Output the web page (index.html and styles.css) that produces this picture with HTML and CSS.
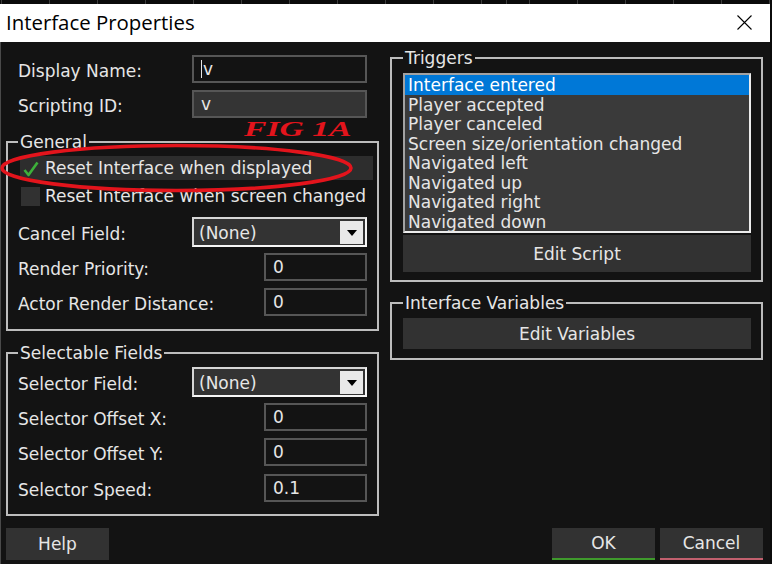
FILE: index.html
```html
<!DOCTYPE html>
<html>
<head>
  <title>Interface Properties</title>
  <meta charset="UTF-8">
  <link rel="stylesheet" href="styles.css">
</head>
<body>
  <div class="top-strip"></div>
  <div class="window">
    <div class="titlebar">
      <span class="title">Interface Properties</span>
      <svg class="close" width="15" height="15" viewBox="0 0 15 15">
        <path d="M0.5 0.5 L14.5 14.5 M14.5 0.5 L0.5 14.5" stroke="#000" stroke-width="1.1" fill="none"/>
      </svg>
    </div>

    <div class="dialog">
      <div class="columns">
        <div class="col-left">
          <div class="top-fields">
            <div class="row">
              <label>Display Name:</label>
              <div class="field field-wide"><span class="caret"></span>v</div>
            </div>
            <div class="row row-gap">
              <label>Scripting ID:</label>
              <div class="field field-wide field-readonly">v</div>
            </div>
          </div>

          <fieldset class="group group-general">
            <legend>General</legend>
            <div class="check-row check-row-active">
              <svg class="check" width="16" height="16" viewBox="0 0 16 16">
                <path d="M1.5 9 L5.5 14 L14.5 1.5" stroke="#3db03a" stroke-width="2.6" fill="none" stroke-linejoin="round"/>
              </svg>
              <span>Reset Interface when displayed</span>
            </div>
            <div class="check-row check-row-plain">
              <span class="box"></span>
              <span>Reset Interface when screen changed</span>
            </div>
            <div class="row row-select">
              <label>Cancel Field:</label>
              <div class="select"><span class="select-text">(None)</span><span class="arrow"></span></div>
            </div>
            <div class="row mt6">
              <label>Render Priority:</label>
              <div class="field field-short">0</div>
            </div>
            <div class="row mt7">
              <label>Actor Render Distance:</label>
              <div class="field field-short">0</div>
            </div>
          </fieldset>

          <fieldset class="group group-selectable">
            <legend>Selectable Fields</legend>
            <div class="row">
              <label>Selector Field:</label>
              <div class="select"><span class="select-text">(None)</span><span class="arrow"></span></div>
            </div>
            <div class="row mt6">
              <label>Selector Offset X:</label>
              <div class="field field-short">0</div>
            </div>
            <div class="row mt7">
              <label>Selector Offset Y:</label>
              <div class="field field-short">0</div>
            </div>
            <div class="row mt8">
              <label>Selector Speed:</label>
              <div class="field field-short">0.1</div>
            </div>
          </fieldset>
        </div>

        <div class="col-right">
          <fieldset class="group group-triggers">
            <legend>Triggers</legend>
            <div class="listbox">
              <div class="item selected">Interface entered</div>
              <div class="item">Player accepted</div>
              <div class="item">Player canceled</div>
              <div class="item">Screen size/orientation changed</div>
              <div class="item">Navigated left</div>
              <div class="item">Navigated up</div>
              <div class="item">Navigated right</div>
              <div class="item">Navigated down</div>
            </div>
            <button class="btn btn-script">Edit Script</button>
          </fieldset>

          <fieldset class="group group-variables">
            <legend>Interface Variables</legend>
            <button class="btn btn-vars">Edit Variables</button>
          </fieldset>
        </div>
      </div>

      <div class="footer">
        <button class="btn btn-help">Help</button>
        <div class="footer-right">
          <button class="btn btn-ok">OK</button>
          <button class="btn btn-cancel">Cancel</button>
        </div>
      </div>

      <!-- annotation drawn over the dialog -->
      <svg class="mark" width="360" height="52" viewBox="0 0 360 52">
        <ellipse cx="176.5" cy="26" rx="174.5" ry="22.5" stroke="#e3141c" stroke-width="3.6" fill="none"/>
      </svg>
      <div class="fig">FIG 1A</div>
    </div>
  </div>
</body>
</html>
```

FILE: styles.css
```css
html, body {
  margin: 0;
  padding: 0;
  background-color: #0b0b0b;
}

body {
  width: 772px;
  height: 564px;
  overflow: hidden;
  font-family: "DejaVu Sans", sans-serif;
  font-size: 17px;
  color: #e6e6e6;
}

.top-strip {
  height: 4px;
  background-color: #0a0a0a;
  background-image:
    repeating-linear-gradient(to right, #3c3c3c 0, #3c3c3c 1px, transparent 1px, transparent 48px),
    linear-gradient(to right, transparent 506px, #3c3c3c 506px, #3c3c3c 507px, transparent 507px);
  background-position: 1px 0, 0 0;
}

.window {
  width: 770px;
}

.titlebar {
  height: 38px;
  background-color: #fff;
  display: flex;
  align-items: center;
  justify-content: space-between;
}

.title {
  font-family: "Open Sans", sans-serif;
  font-size: 20.4px;
  color: #000;
  padding-left: 6px;
  margin-top: -3px;
}

.close {
  margin-right: 18px;
  margin-top: -2px;
}

.dialog {
  position: relative;
  height: 522px;
  background-color: #131313;
  box-shadow: inset 1px 0 0 #4a4a4a;
  display: flex;
  flex-direction: column;
  box-sizing: border-box;
  padding: 0 7px 4px 6px;
}

.columns {
  display: grid;
  grid-template-columns: 373px 373px;
  column-gap: 11px;
  align-items: start;
}

.col-left {
  padding-top: 13px;
}

.col-right {
  padding-top: 6px;
}

.top-fields {
  padding: 0 12px;
}

.row {
  display: flex;
  align-items: center;
  justify-content: space-between;
}

.row-gap { margin-top: 7px; }
.row-select { margin-top: 11px; }
.mt6 { margin-top: 6px; }
.mt7 { margin-top: 7px; }
.mt8 { margin-top: 8px; }

label {
  white-space: nowrap;
  padding-top: 3px;
}

.field {
  box-sizing: border-box;
  height: 28px;
  border: 2px solid #565656;
  background-color: #131313;
  color: #e6e6e6;
  padding: 0 7px;
  line-height: 23px;
  display: flex;
  align-items: center;
}

.field-wide {
  width: 175px;
}

.field-short {
  width: 103px;
}

.field-readonly {
  background-color: #343434;
}

.caret {
  display: inline-block;
  width: 1px;
  height: 18px;
  background-color: #e6e6e6;
  margin-right: 1px;
}

.group {
  margin: 0;
  border: 2px solid #bdbdbd;
  min-width: 0;
}

.group legend {
  margin-left: 0;
  padding: 0 2px;
  line-height: 20px;
  color: #e6e6e6;
}

.group-general {
  margin-top: 14px;
  padding: 4px 10px 13px;
}

.group-selectable {
  margin-top: 12px;
  padding: 4px 10px 12px;
}

.check-row {
  display: flex;
  align-items: center;
  white-space: nowrap;
}

.check-row-active {
  height: 24px;
  margin: 0 -6px 0 2px;
  background-color: #2d2d2d;
}

.check {
  margin-left: 3px;
  margin-right: 6px;
  margin-top: 1px;
}

.check-row-plain {
  height: 20px;
  margin-top: 6px;
  margin-left: 3px;
}

.box {
  width: 19px;
  height: 19px;
  background-color: #313131;
  margin-right: 5px;
}

.select {
  box-sizing: border-box;
  width: 175px;
  height: 30px;
  border: 2px solid #d6d6d6;
  border-right-color: #f6f6f6;
  border-bottom-color: #f6f6f6;
  background-color: #333;
  display: flex;
  align-items: center;
  justify-content: space-between;
  padding: 0 2px 0 5px;
}

.select-text {
  padding-top: 2px;
}

.arrow {
  width: 23px;
  height: 23px;
  background-color: #e9e9e9;
  position: relative;
}

.arrow::after {
  content: "";
  position: absolute;
  left: 7px;
  top: 9px;
  border-left: 5px solid transparent;
  border-right: 5px solid transparent;
  border-top: 6px solid #000;
}

.group-triggers {
  padding: 5px 10px 8px 11px;
}

.group-variables {
  margin-top: 11px;
  padding: 5px 10px 9px 11px;
}

.listbox {
  box-sizing: border-box;
  height: 160px;
  border: 2px solid #a2a2a2;
  border-right-color: #ececec;
  border-bottom-color: #ececec;
  background-color: #3a3a3a;
}

.item {
  height: 19.5px;
  line-height: 20.5px;
  padding-left: 3px;
  white-space: nowrap;
}

.item.selected {
  background-color: #0078d7;
  color: #fff;
}

.btn {
  display: block;
  border: none;
  background-color: #323232;
  color: #e6e6e6;
  font-family: "DejaVu Sans", sans-serif;
  font-size: 17px;
  padding: 0;
  box-sizing: border-box;
}

.btn-script {
  width: 100%;
  height: 37px;
  margin-top: 2px;
}

.btn-vars {
  width: 100%;
  height: 31px;
}

.footer {
  margin-top: auto;
  display: flex;
  justify-content: space-between;
}

.footer-right {
  display: flex;
  gap: 5px;
}

.btn-help,
.btn-ok,
.btn-cancel {
  width: 103px;
  height: 32px;
}

.btn-ok {
  border-bottom: 2px solid #3f9a2c;
}

.btn-cancel {
  border-bottom: 2px solid #c2606e;
}

.mark {
  position: absolute;
  left: 0;
  top: 100px;
}

.fig {
  position: absolute;
  left: 244px;
  top: 74px;
  font-family: "Liberation Serif", serif;
  font-weight: bold;
  font-style: italic;
  font-size: 22px;
  color: #e3141c;
  transform: scaleX(1.53);
  transform-origin: left top;
  white-space: nowrap;
}
```
